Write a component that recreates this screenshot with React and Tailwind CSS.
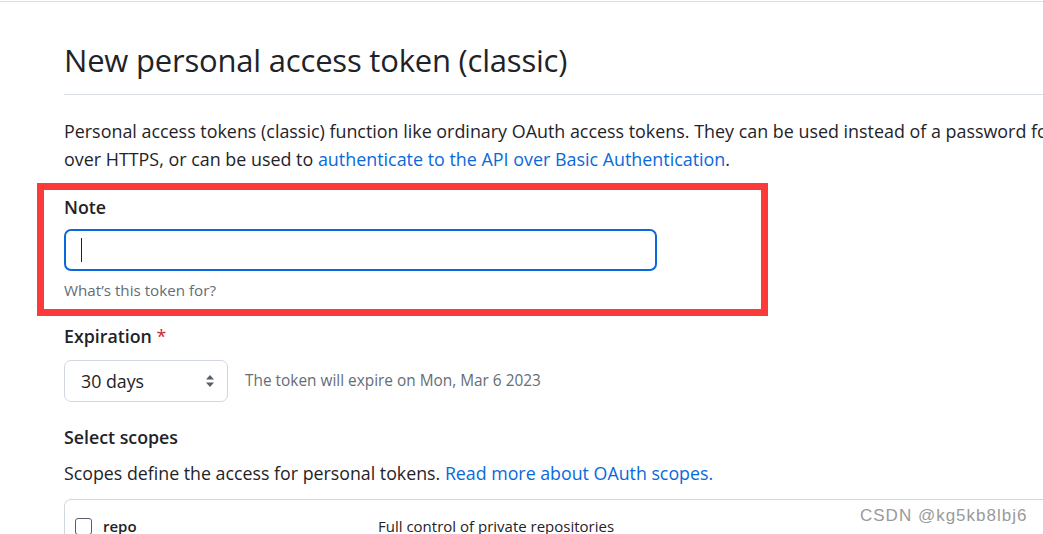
const SelectArrows = () => (
  <svg width="10" height="14" viewBox="0 0 10 14" className="text-[#57606a]">
    <path d="M5 1 L9 5.5 H1 Z" fill="currentColor" />
    <path d="M5 13 L9 8.5 H1 Z" fill="currentColor" />
  </svg>
);

const App = () => {
  return (
    <div className="relative w-[1043px] h-[534px] bg-white overflow-hidden text-[#1f2328] font-['Open_Sans',sans-serif]">
      <div className="mt-px border-t border-[#d8dee4]" />

      <div className="pl-16 w-[1200px]">
        {/* heading */}
        <div className="pt-[38px] pb-[14px] border-b border-[#d8dee4]">
          <h2 className="text-[31px] leading-[40px] font-normal tracking-[-0.2px]">
            New personal access token (classic)
          </h2>
        </div>

        <p className="mt-[22px] text-[17.9px] leading-[28px] whitespace-nowrap">
          Personal access tokens (classic) function like ordinary OAuth access tokens. They can be used instead of a password for Git
          <br />
          over HTTPS, or can be used to{' '}
          <span className="text-[#0969da]">authenticate to the API over Basic Authentication</span>.
        </p>

        {/* note group (highlighted) */}
        <div className="mt-[10px] -ml-[27px] w-[731px] h-[133px] border-[7px] border-[#fc3a3a] pl-[20px] pt-[5px]">
          <div className="text-[17.8px] leading-[24px] font-semibold">Note</div>
          <div className="mt-[10px] w-[593px] h-[42px] rounded-[7px] border-2 border-[#0969da] flex items-center pl-[15px]">
            <div className="w-px h-[24px] bg-[#1f2328]" />
          </div>
          <div className="mt-[9px] text-[15.2px] leading-[20px] text-[#656d76]">What’s this token for?</div>
        </div>

        {/* expiration */}
        <div className="mt-[8px] text-[17.8px] leading-[24px] font-semibold">
          Expiration <span className="text-[#cf222e] font-normal">*</span>
        </div>
        <div className="mt-[12px] flex items-center">
          <div className="w-[164px] h-[42px] rounded-[7px] border border-[#d0d7de] flex items-center justify-between pl-[16px] pr-[12px] text-[17.8px]">
            <span>30 days</span>
            <SelectArrows />
          </div>
          <span className="ml-[17px] text-[15.4px] text-[#656d76]">The token will expire on Mon, Mar 6 2023</span>
        </div>

        {/* scopes */}
        <div className="mt-[23px] text-[17.8px] leading-[24px] font-semibold">Select scopes</div>
        <p className="mt-[12px] text-[17.8px] leading-[24px] whitespace-nowrap">
          Scopes define the access for personal tokens.{' '}
          <span className="text-[#0969da]">Read more about OAuth scopes.</span>
        </p>

        <div className="mt-[14px] w-[1100px] h-[80px] rounded-tl-[7px] border border-[#d0d7de]">
          <div className="flex items-center pt-[16px] pl-[10px]">
            <div className="w-[17px] h-[17px] rounded-[3px] border border-[#57606a] bg-white" />
            <span className="ml-[11px] w-[275px] text-[15px] leading-[20px] font-semibold">repo</span>
            <span className="text-[15px] leading-[20px] text-[#1f2328]">Full control of private repositories</span>
          </div>
        </div>
      </div>

      <div className="absolute left-[860px] top-[505px] text-[17px] leading-[22px] tracking-[1px] text-[#9a9a9a] font-['Liberation_Sans',sans-serif]">
        CSDN @kg5kb8lbj6
      </div>
    </div>
  );
};

export default App;
